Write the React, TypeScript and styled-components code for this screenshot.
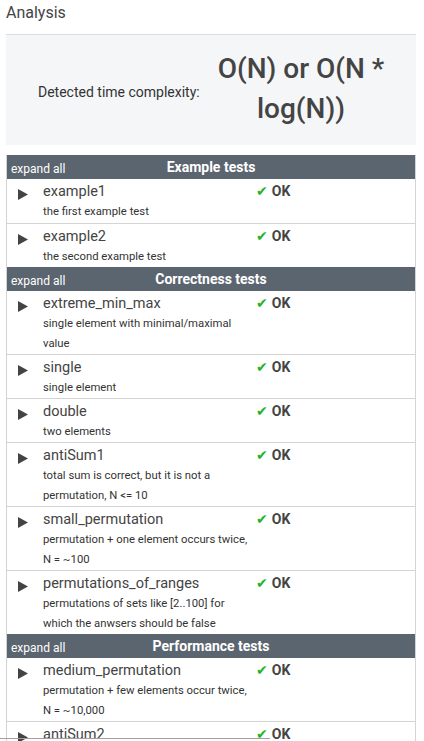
import React from "react";
import styled, { createGlobalStyle } from "styled-components";

const Global = createGlobalStyle`
  html, body { margin: 0; padding: 0; background: #ffffff; }
  body { font-family: Roboto, "Liberation Sans", Arial, sans-serif; color: #444; }
`;

const Page = styled.div`
  padding: 0 8px 0 6px;
  width: 410px;
`;

const Title = styled.h2`
  margin: 0;
  padding: 3px 0 0 0;
  font-size: 16px;
  font-weight: 400;
  line-height: 19px;
  color: #444;
  height: 34px;
  box-sizing: border-box;
`;

const ComplexityBox = styled.div`
  background: #f5f6f8;
  border-top: 1px solid #dcdde0;
  height: 111px;
  box-sizing: border-box;
  display: flex;
  align-items: center;
  padding-left: 32px;
`;

const ComplexityLabel = styled.div`
  font-size: 14px;
  color: #333;
  width: 177px;
  padding-top: 4px;
`;

const ComplexityValue = styled.div`
  width: 172px;
  text-align: center;
  font-size: 28px;
  font-weight: 500;
  line-height: 40px;
  color: #444;
  padding-bottom: 2px;
`;

const Table = styled.div`
  margin-top: 10px;
  border-left: 1px solid #d4d4d4;
  border-right: 1px solid #d4d4d4;
`;

const GroupHeader = styled.div`
  background: #5b6570;
  color: #fff;
  height: 24px;
  display: grid;
  grid-template-columns: 1fr auto 1fr;
  align-items: center;
`;

const ExpandAll = styled.span`
  font-size: 12px;
  padding-left: 4px;
  padding-top: 3px;
`;

const GroupTitle = styled.span`
  font-size: 14px;
  font-weight: 700;
  padding-bottom: 1px;
`;

const Row = styled.div<{ $first?: boolean }>`
  display: grid;
  grid-template-columns: 36px 213px 1fr;
  align-items: start;
  border-top: ${(p) => (p.$first ? "none" : "1px solid #d4d4d4")};
  padding: 2px 0 0;
  min-height: ${(p) => (p.$first ? "44px" : "43px")};
  box-sizing: border-box;
`;

const Arrow = styled.div`
  padding: 4px 0 0 11px;
  height: 12px;
`;

const NameCell = styled.div`
  padding-right: 8px;
`;

const TestName = styled.div`
  font-size: 14.5px;
  line-height: 21px;
  color: #444;
`;

const Desc = styled.div`
  font-size: 11.3px;
  line-height: 20px;
  color: #333;
`;

const Status = styled.div`
  font-size: 14px;
  font-weight: 700;
  line-height: 21px;
  color: #444;
  display: flex;
  align-items: center;
  gap: 4px;
`;

const Check = styled.span`
  color: #22b422;
  font-family: "DejaVu Sans", sans-serif;
  font-size: 14px;
  font-weight: 400;
`;

const ScrollThumb = styled.div`
  position: fixed;
  left: 0;
  bottom: 2px;
  width: 270px;
  height: 1px;
  background: #a0a0a0;
`;

type Test = { name: string; desc: string };
type Group = { title: string; tests: Test[] };

const groups: Group[] = [
  {
    title: "Example tests",
    tests: [
      { name: "example1", desc: "the first example test" },
      { name: "example2", desc: "the second example test" },
    ],
  },
  {
    title: "Correctness tests",
    tests: [
      { name: "extreme_min_max", desc: "single element with minimal/maximal value" },
      { name: "single", desc: "single element" },
      { name: "double", desc: "two elements" },
      { name: "antiSum1", desc: "total sum is correct, but it is not a permutation, N <= 10" },
      { name: "small_permutation", desc: "permutation + one element occurs twice, N = ~100" },
      { name: "permutations_of_ranges", desc: "permutations of sets like [2..100] for which the anwsers should be false" },
    ],
  },
  {
    title: "Performance tests",
    tests: [
      { name: "medium_permutation", desc: "permutation + few elements occur twice, N = ~10,000" },
      { name: "antiSum2", desc: "total sum is correct, but it is not a permutation, N = ~100,000" },
    ],
  },
];

const Triangle = () => (
  <svg width="10" height="11" viewBox="0 0 10 11">
    <polygon points="0,0 10,5.5 0,11" fill="#444" />
  </svg>
);

export default function App() {
  return (
    <Page>
      <Global />
      <Title>Analysis</Title>
      <ComplexityBox>
        <ComplexityLabel>Detected time complexity:</ComplexityLabel>
        <ComplexityValue>O(N) or O(N * log(N))</ComplexityValue>
      </ComplexityBox>
      <Table>
        {groups.map((g) => (
          <React.Fragment key={g.title}>
            <GroupHeader>
              <ExpandAll>expand all</ExpandAll>
              <GroupTitle>{g.title}</GroupTitle>
              <span />
            </GroupHeader>
            {g.tests.map((t, i) => (
              <Row key={t.name} $first={i === 0}>
                <Arrow>
                  <Triangle />
                </Arrow>
                <NameCell>
                  <TestName>{t.name}</TestName>
                  <Desc>{t.desc}</Desc>
                </NameCell>
                <Status>
                  <Check>✔</Check>OK
                </Status>
              </Row>
            ))}
          </React.Fragment>
        ))}
      </Table>
      <ScrollThumb />
    </Page>
  );
}
